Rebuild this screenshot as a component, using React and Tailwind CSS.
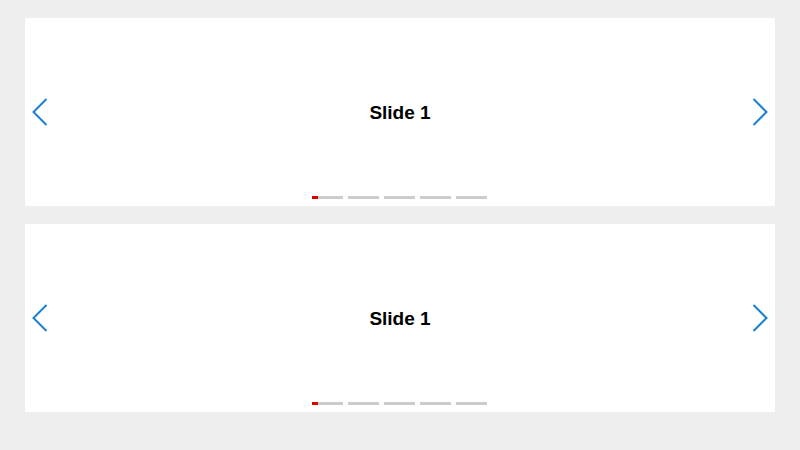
const slides = [1, 2, 3, 4, 5];

function Chevron({ dir }) {
  const d = dir === "left" ? "M14 1 L1 14 L14 27" : "M1 1 L14 14 L1 27";
  return (
    <svg width="16" height="28" viewBox="0 0 15 28" fill="none">
      <path d={d} stroke="#1a7fd4" strokeWidth="2" strokeLinejoin="miter" />
    </svg>
  );
}

function Carousel() {
  return (
    <div className="relative h-[188px] bg-white flex items-center justify-center">
      <button className="absolute left-[7px] top-[80px] flex">
        <Chevron dir="left" />
      </button>
      <div className="mt-[2px] text-[19px] font-bold text-black">Slide 1</div>
      <button className="absolute right-[7px] top-[80px] flex">
        <Chevron dir="right" />
      </button>
      <div className="absolute bottom-[7px] left-0 right-[1px] flex justify-center gap-[5px]">
        {slides.map((s, i) => (
          <div key={s} className="w-[31px] h-[3px] bg-[#cccccc]">
            {i === 0 && <div className="w-[6px] h-full bg-[#d90000]" />}
          </div>
        ))}
      </div>
    </div>
  );
}

export default function App() {
  return (
    <div
      className="w-[800px] h-[450px] bg-[#eeeeee] px-[25px] pt-[18px] flex flex-col gap-[18px]"
      style={{ fontFamily: '"Liberation Sans", Arial, sans-serif' }}
    >
      <Carousel />
      <Carousel />
    </div>
  );
}
